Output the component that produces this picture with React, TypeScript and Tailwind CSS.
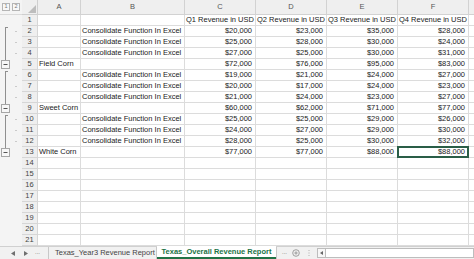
import React from 'react';

type Row = { a?: string; b?: string; v?: string[] };

const B = 'Consolidate Function In Excel';
const rows: Row[] = [
  { v: ['Q1 Revenue in USD', 'Q2 Revenue in USD', 'Q3 Revenue in USD', 'Q4 Revenue in USD'] },
  { b: B, v: ['$20,000', '$23,000', '$35,000', '$28,000'] },
  { b: B, v: ['$25,000', '$28,000', '$30,000', '$24,000'] },
  { b: B, v: ['$27,000', '$25,000', '$30,000', '$31,000'] },
  { a: 'Field Corn', v: ['$72,000', '$76,000', '$95,000', '$83,000'] },
  { b: B, v: ['$19,000', '$21,000', '$24,000', '$27,000'] },
  { b: B, v: ['$20,000', '$17,000', '$24,000', '$23,000'] },
  { b: B, v: ['$21,000', '$24,000', '$23,000', '$27,000'] },
  { a: 'Sweet Corn', v: ['$60,000', '$62,000', '$71,000', '$77,000'] },
  { b: B, v: ['$25,000', '$25,000', '$29,000', '$26,000'] },
  { b: B, v: ['$24,000', '$27,000', '$29,000', '$30,000'] },
  { b: B, v: ['$28,000', '$25,000', '$30,000', '$32,000'] },
  { a: 'White Corn', v: ['$77,000', '$77,000', '$88,000', '$88,000'] },
  {}, {}, {}, {}, {}, {}, {}, {},
];

const cols = ['A', 'B', 'C', 'D', 'E', 'F'];

function OutlineDrawing() {
  const groups = [1, 5, 9];
  return (
    <svg width="22" height="231" className="block">
      {groups.map((g) => {
        const top = g * 11;
        const btn = (g + 3) * 11;
        return (
          <g key={g}>
            <line x1="5.5" y1={top + 1} x2="5.5" y2={btn + 2} stroke="#8f8f8f" strokeWidth="1" />
            <line x1="5.5" y1={top + 1.5} x2="8" y2={top + 1.5} stroke="#8f8f8f" strokeWidth="1" />
            {[0, 1, 2].map((i) => (
              <rect key={i} x="15.5" y={top + i * 11 + 5} width="1" height="1" fill="#a0a0a0" />
            ))}
            <rect x="1.5" y={btn + 1.5} width="8" height="8" fill="#f7f7f7" stroke="#a6a6a6" strokeWidth="1" />
            <line x1="3.5" y1={btn + 5.5} x2="7.5" y2={btn + 5.5} stroke="#555" strokeWidth="1" />
          </g>
        );
      })}
    </svg>
  );
}

export default function App() {
  return (
    <div className="w-[474px] h-[259px] overflow-hidden bg-white flex flex-col font-['Liberation_Sans',Arial,sans-serif] text-[7.5px] text-[#1a1a1a]">
      <div className="flex h-[246px]">
        {/* outline panel */}
        <div className="w-[22px] bg-[#f4f4f4] flex flex-col shrink-0">
          <div className="h-[15px] flex items-center gap-[2px] pl-[2px] border-b border-[#dadada]">
            <div className="w-[8px] h-[8px] border border-[#b5b5b5] bg-[#f8f8f8] flex items-center justify-center text-[5.5px] leading-none text-[#777]">1</div>
            <div className="w-[8px] h-[8px] border border-[#b5b5b5] bg-[#f8f8f8] flex items-center justify-center text-[5.5px] leading-none text-[#777]">2</div>
          </div>
          <OutlineDrawing />
        </div>
        {/* grid */}
        <div className="grid grid-cols-[16px_43px_104px_71px_71px_71px_71px_1fr] grid-rows-[15px_repeat(21,11px)] flex-1">
          <div className="bg-[#efefef] border-r border-b border-[#cfcfcf] flex items-end justify-end pr-[1px] pb-[1px]">
            <svg width="8" height="8"><polygon points="8,0 8,8 0,8" fill="#bdbdbd" /></svg>
          </div>
          {cols.map((c) => (
            <div key={c} className="bg-[#efefef] border-r border-b border-[#d2d2d2] flex items-center justify-center text-[#555] leading-none">{c}</div>
          ))}
          <div className="bg-[#efefef] border-b border-[#d2d2d2]" />
          {rows.map((r, i) => (
            <React.Fragment key={i}>
              <div className="bg-[#efefef] border-r border-b border-[#d6d6d6] flex items-center justify-center text-[#444] leading-none">{i + 1}</div>
              <div className="border-r border-b border-[#dcdcdc] pl-[1px] leading-[10px] whitespace-nowrap overflow-visible">{r.a ?? ''}</div>
              <div className="border-r border-b border-[#dcdcdc] pl-[1px] leading-[10px] whitespace-nowrap overflow-hidden">{r.b ?? ''}</div>
              {[0, 1, 2, 3].map((k) => {
                const val = r.v?.[k] ?? '';
                const header = i === 0;
                const sel = i === 12 && k === 3;
                return (
                  <div
                    key={k}
                    className={
                      'relative border-r border-b border-[#dcdcdc] leading-[10px] whitespace-nowrap overflow-visible ' +
                      (header ? 'text-left pl-[1px]' : 'text-right pr-[3px]')
                    }
                  >
                    {val}
                    {sel && <div className="absolute -left-[1px] -top-[1px] -right-[1px] -bottom-[1px] border-2 border-[#2a5e47]" />}
                  </div>
                );
              })}
              <div className="border-b border-[#dcdcdc]" />
            </React.Fragment>
          ))}
        </div>
      </div>
      {/* tab bar */}
      <div className="h-[13px] flex items-stretch bg-[#f1f1f1] border-t border-[#d0d0d0] text-[#444]">
        <div className="w-[48px] flex items-center shrink-0">
          <svg width="4" height="5" className="ml-[11px]"><polygon points="4,0 4,5 0,2.5" fill="#6f6f6f" /></svg>
          <svg width="4" height="5" className="ml-[9px]"><polygon points="0,0 0,5 4,2.5" fill="#6f6f6f" /></svg>
          <span className="ml-[7px] text-[6px] leading-none text-[#666] -mt-[2px]">...</span>
        </div>
        <div className="w-[109px] border-l border-r border-[#c8c8c8] flex items-center pl-[6px] whitespace-nowrap shrink-0 leading-none">Texas_Year3 Revenue Report</div>
        <div className="w-[119px] bg-white border-b-2 border-[#217346] flex items-center justify-center whitespace-nowrap shrink-0 font-bold text-[#217346] leading-none -mt-[1px]">Texas_Overall Revenue Report</div>
        <div className="w-[41px] flex items-center shrink-0 border-l border-[#c8c8c8]">
          <span className="ml-[5px] text-[6px] leading-none text-[#666] -mt-[2px]">...</span>
          <svg width="8" height="8" className="ml-[5px]">
            <circle cx="4" cy="4" r="3.3" fill="none" stroke="#8a8a8a" strokeWidth="0.8" />
            <line x1="2.3" y1="4" x2="5.7" y2="4" stroke="#8a8a8a" strokeWidth="0.8" />
            <line x1="4" y1="2.3" x2="4" y2="5.7" stroke="#8a8a8a" strokeWidth="0.8" />
          </svg>
          <svg width="2" height="8" className="ml-[8px]">
            <rect x="0.5" y="1" width="1" height="1" fill="#b0b0b0" />
            <rect x="0.5" y="3.5" width="1" height="1" fill="#b0b0b0" />
            <rect x="0.5" y="6" width="1" height="1" fill="#b0b0b0" />
          </svg>
        </div>
        <div className="flex-1 flex items-stretch py-[1px]">
          <div className="flex-1 flex border border-[#bdbdbd] bg-white">
            <div className="w-[8px] border-r border-[#bdbdbd] bg-[#f7f7f7] flex items-center justify-center">
              <svg width="3" height="4"><polygon points="3,0 3,4 0,2" fill="#666" /></svg>
            </div>
          </div>
        </div>
      </div>
    </div>
  );
}
